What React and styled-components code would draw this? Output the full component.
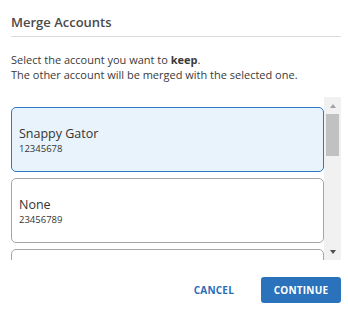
import React, { useState } from 'react';
import styled, { createGlobalStyle } from 'styled-components';

const GlobalStyle = createGlobalStyle`
    html, body {
        margin: 0;
        padding: 0;
        background: #ffffff;
    }
    body {
        font-family: "Open Sans", sans-serif;
        color: #333333;
    }
`

const Dialog = styled.div`
    width: 348px;
    height: 315px;
    box-sizing: border-box;
    padding: 13px 7px 0 11px;
    display: flex;
    flex-direction: column;
`

const Title = styled.h2`
    margin: 0;
    padding: 0 0 5px 0;
    font-size: 13px;
    font-weight: 600;
    line-height: 18px;
    color: #4a4a4a;
    border-bottom: 1px solid #dcdcdc;
`

const Intro = styled.p`
    margin: 15px 0 0 0;
    font-size: 11px;
    line-height: 15px;
    color: #3a3a3a;
`

// list + hand drawn scrollbar side by side
const ListFrame = styled.div`
    margin-top: 15px;
    flex: 0 0 163px;
    display: flex;
    overflow: hidden;
`

const List = styled.div`
    flex: 1;
    overflow: hidden;
    display: flex;
    flex-direction: column;
    gap: 6px;
    padding-top: 10px;
`

const ScrollBar = styled.div`
    flex: 0 0 17px;
    display: flex;
    flex-direction: column;
    background: #f1f1f1;
`

const ArrowButton = styled.div`
    flex: 0 0 17px;
    display: flex;
    align-items: center;
    justify-content: center;

    &:after {
        content: "";
        width: 0;
        height: 0;
        border-left: 3.5px solid transparent;
        border-right: 3.5px solid transparent;
        ${props => props.down
            ? 'border-top: 4px solid #505050;'
            : 'border-bottom: 4px solid #a3a3a3;'}
    }
`

const Track = styled.div`
    flex: 1;
    padding: 0 2px;
`

const Thumb = styled.div`
    height: 42px;
    background: #c1c1c1;
`

const Card = styled.button`
    flex: 0 0 auto;
    height: 65px;
    box-sizing: border-box;
    padding: 17px 7px 0 7px;
    text-align: left;
    display: flex;
    flex-direction: column;
    justify-content: flex-start;
    border-radius: 5px;
    border: 1px solid ${props => props.selected ? '#2f78c4' : '#a6a6a6'};
    background: ${props => props.selected ? '#e9f3fc' : '#ffffff'};
    font-family: "Open Sans", sans-serif;
    cursor: pointer;
`

const Name = styled.div`
    font-size: 12.5px;
    line-height: 17px;
    color: #333333;
`

const Number = styled.div`
    font-size: 9.5px;
    line-height: 13px;
    color: #333333;
`

const Footer = styled.div`
    display: flex;
    justify-content: flex-end;
    align-items: center;
    gap: 27px;
    margin-top: 17px;
`

const TextButton = styled.button`
    background: none;
    border: none;
    padding: 0;
    font-family: "Open Sans", sans-serif;
    font-size: 10px;
    font-weight: 700;
    letter-spacing: 0.02em;
    color: #2a6eb8;
    cursor: pointer;
`

const PrimaryButton = styled.button`
    width: 80px;
    height: 26px;
    border: none;
    border-radius: 3px;
    background: #2a72bc;
    color: #ffffff;
    font-family: "Open Sans", sans-serif;
    font-size: 10px;
    font-weight: 700;
    letter-spacing: 0.02em;
    cursor: pointer;
`

const accounts = [
    { name: 'Snappy Gator', id: '12345678' },
    { name: 'None', id: '23456789' },
    { name: '', id: '' },
];

export default function App() {
    const [selected, setSelected] = useState(0);
    return (
        <>
            <GlobalStyle />
            <Dialog>
                <Title>Merge Accounts</Title>
                <Intro>
                    Select the account you want to <b>keep</b>.<br />
                    The other account will be merged with the selected one.
                </Intro>
                <ListFrame>
                    <List>
                        {accounts.map((a, i) => (
                            <Card key={i} selected={i === selected} onClick={() => setSelected(i)}>
                                <Name>{a.name}</Name>
                                <Number>{a.id}</Number>
                            </Card>
                        ))}
                    </List>
                    <ScrollBar>
                        <ArrowButton />
                        <Track>
                            <Thumb />
                        </Track>
                        <ArrowButton down />
                    </ScrollBar>
                </ListFrame>
                <Footer>
                    <TextButton>CANCEL</TextButton>
                    <PrimaryButton>CONTINUE</PrimaryButton>
                </Footer>
            </Dialog>
        </>
    );
}
